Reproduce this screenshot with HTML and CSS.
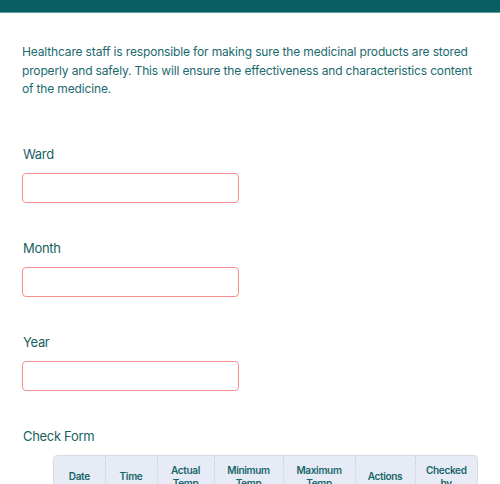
FILE: index.html
```html
<!DOCTYPE html>
<html>
<head>
<meta charset="utf-8">
<link rel="stylesheet" href="styles.css">
</head>
<body>
<div class="topbar"></div>
<main class="content">
  <p class="intro">Healthcare staff is responsible for making sure the medicinal products are stored properly and safely. This will ensure the effectiveness and characteristics content of the medicine.</p>
  <div class="field">
    <label class="label">Ward</label>
    <input class="input" type="text">
  </div>
  <div class="field">
    <label class="label">Month</label>
    <input class="input" type="text">
  </div>
  <div class="field">
    <label class="label">Year</label>
    <input class="input" type="text">
  </div>
  <div class="field">
    <div class="label">Check Form</div>
    <div class="table-wrap">
      <table class="table">
        <thead>
          <tr>
            <th class="c-date">Date</th>
            <th class="c-time">Time</th>
            <th class="c-actual">Actual Temp</th>
            <th class="c-min">Minimum Temp</th>
            <th class="c-max">Maximum Temp</th>
            <th class="c-actions">Actions</th>
            <th class="c-checked">Checked by</th>
          </tr>
        </thead>
      </table>
    </div>
  </div>
</main>
</body>
</html>
```
FILE: styles.css
```css
html, body {
  margin: 0;
  padding: 0;
  background: #ffffff;
  font-family: Inter, "Noto Sans", sans-serif;
  letter-spacing: -0.02em;
  color: #17666a;
}
.topbar {
  height: 12px;
  background: #075e63;
  border-bottom: 1px solid #5f9ea1;
}
.content {
  padding: 0 22px;
}
.intro {
  margin: 30px 0 0 0;
  font-size: 12px;
  letter-spacing: -0.15px;
  line-height: 18.5px;
  color: #1a6a6d;
}
.field {
  display: flex;
  flex-direction: column;
  align-items: flex-start;
}
.intro + .field {
  margin-top: 46px;
}
.field + .field {
  margin-top: 36px;
}
.label {
  font-size: 13px;
  line-height: 18px;
  margin: 0 0 10px 1px;
  color: #195f63;
}
.input {
  box-sizing: border-box;
  width: 217px;
  height: 30px;
  margin: 0;
  border: 1px solid #f78f8f;
  border-radius: 4px;
  background: #fff;
  outline: none;
}
.table-wrap {
  margin-left: 31px;
  box-sizing: border-box;
  width: 425px;
  border: 1px solid #d5dce8;
  border-radius: 4px;
  overflow: hidden;
  background: #e6ebf5;
}
.table {
  width: 100%;
  border-collapse: collapse;
  table-layout: fixed;
}
.table th {
  box-sizing: border-box;
  background: #e6ebf5;
  font-size: 10px;
  font-weight: 600;
  line-height: 13px;
  color: #17666a;
  text-align: center;
  vertical-align: middle;
  padding: 8px 6px;
  height: 42px;
  border-left: 1px dotted #c8cfdb;
}
.table th:first-child { border-left: none; }
.c-date { width: 51px; }
.c-time { width: 52px; }
.c-actual { width: 57px; }
.c-min { width: 69px; }
.c-max { width: 72px; }
.c-actions { width: 60px; }
.c-checked { width: auto; }
```
